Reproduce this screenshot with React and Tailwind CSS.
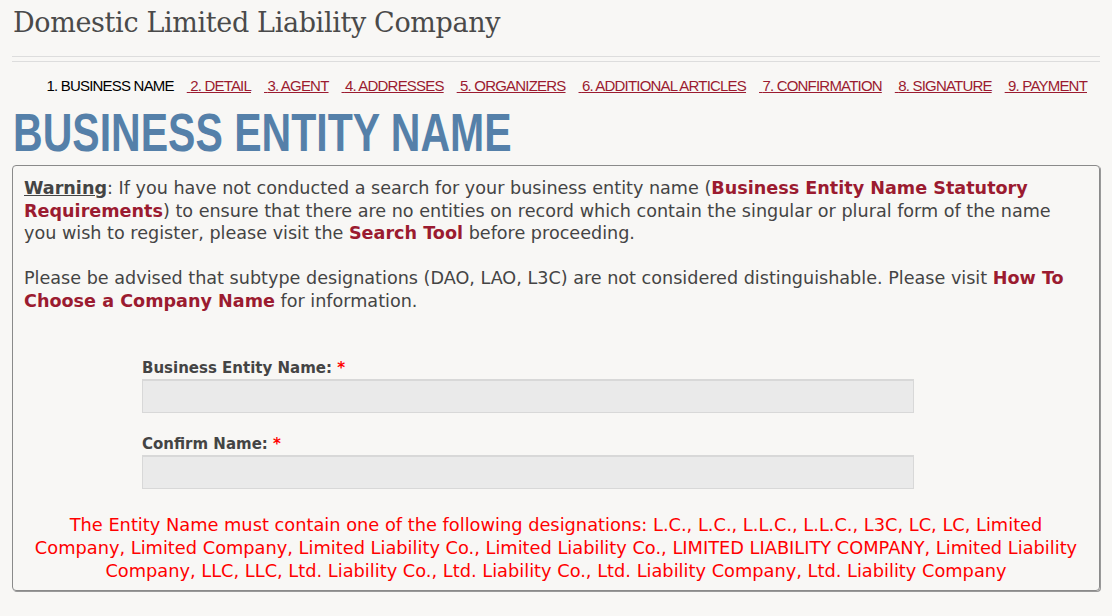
export default function App() {
  const steps = [
    "2. DETAIL",
    "3. AGENT",
    "4. ADDRESSES",
    "5. ORGANIZERS",
    "6. ADDITIONAL ARTICLES",
    "7. CONFIRMATION",
    "8. SIGNATURE",
    "9. PAYMENT",
  ];
  const link = "text-[#9b1b30] font-bold";
  return (
    <div className="min-h-[616px] w-[1112px] bg-[#f8f7f5] px-[12px] pt-[5px]">
      <h1 className="font-['Georgia','DejaVu_Serif',serif] text-[27px] leading-[36px] text-[#4a4a4a] pl-[1px] tracking-[-0.35px]">
        Domestic Limited Liability Company
      </h1>
      <div className="mt-[15px] h-[6px] border-t border-b border-[#dddddd] w-[1088px]" />
      <nav className="mt-[15px] flex justify-end gap-[13px] pr-[13px] font-['Liberation_Sans',Arial,sans-serif] text-[15px] leading-[18px] tracking-[-0.8px]">
        <span className="text-black">1. BUSINESS NAME</span>
        {steps.map((s) => (
          <a key={s} className="text-[#9b1b30] underline">
            &nbsp;{s}
          </a>
        ))}
      </nav>
      <h2 className="mt-[11px] pl-[1px] font-['Liberation_Sans',Arial,sans-serif] font-bold text-[54px] leading-[52px] text-[#5580a9] whitespace-nowrap">
        <span className="inline-block origin-left scale-x-[0.76]">BUSINESS ENTITY NAME</span>
      </h2>
      <div className="mt-[7px] w-[1088px] h-[426px] rounded-[4px] border border-[#8a8a8a] shadow-[1px_1px_0_#999] px-[11px] pt-[11px] font-['DejaVu_Sans',Verdana,sans-serif] text-[17.6px] leading-[22.5px] text-[#444444]">
        <div className="pr-[9px]">
          <p>
            <span className="font-bold underline">Warning</span>: If you have not
            conducted a search for your business entity name (
            <span className={link}>Business Entity Name Statutory Requirements</span>
            ) to ensure that there are no entities on record which contain the
            singular or plural form of the name you wish to register, please
            visit the <span className={link}>Search Tool</span> before
            proceeding.
          </p>
          <p className="mt-[22.5px]">
            Please be advised that subtype designations (DAO, LAO, L3C) are not
            considered distinguishable. Please visit{" "}
            <span className={link}>How To Choose a Company Name</span> for
            information.
          </p>
        </div>
        <div className="mt-[47px] pl-[118px]">
          <label className="block text-[15px] leading-[18px] font-bold text-[#444]">
            Business Entity Name: <span className="text-[#ff0000]">*</span>
          </label>
          <div className="mt-[2px] w-[772px] h-[34px] bg-[#eaeaea] border border-[#d8d8d8] border-t-2" />
          <label className="mt-[22px] block text-[15px] leading-[18px] font-bold text-[#444]">
            Confirm Name: <span className="text-[#ff0000]">*</span>
          </label>
          <div className="mt-[2px] w-[772px] h-[34px] bg-[#eaeaea] border border-[#d8d8d8] border-t-2" />
        </div>
        <p className="mt-[24px] text-center text-[#ff0000] text-[17.8px] leading-[23px] px-[6px]">
          The Entity Name must contain one of the following designations: L.C.,
          L.C., L.L.C., L.L.C., L3C, LC, LC, Limited Company, Limited Company,
          Limited Liability Co., Limited Liability Co., LIMITED LIABILITY
          COMPANY, Limited Liability Company, LLC, LLC, Ltd. Liability Co., Ltd.
          Liability Co., Ltd. Liability Company, Ltd. Liability Company
        </p>
      </div>
    </div>
  );
}
